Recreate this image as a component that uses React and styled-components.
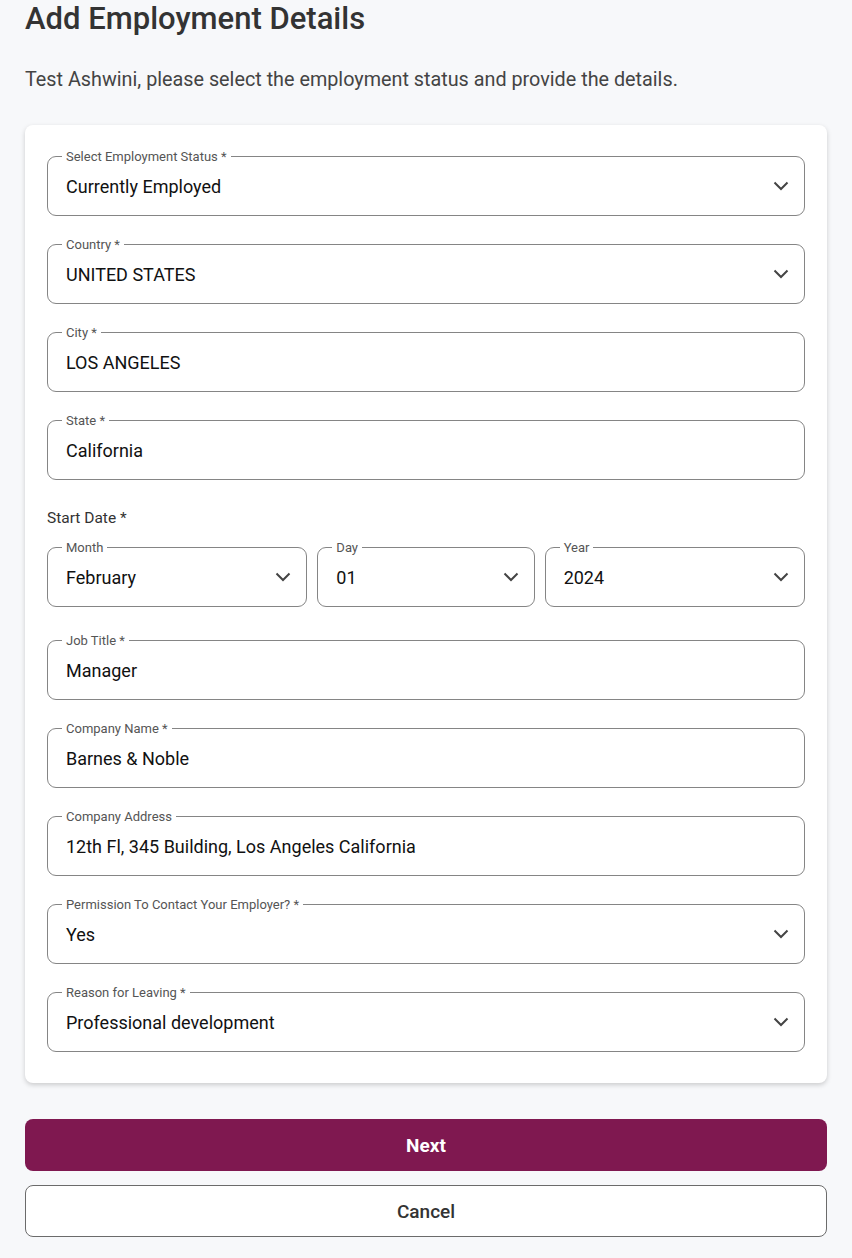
import * as React from "react"
import styled, { createGlobalStyle } from "styled-components"

const GlobalStyle = createGlobalStyle`
  body {
    margin: 0;
    background: #f7f8fa;
    font-family: Roboto, "Liberation Sans", sans-serif;
    color: #222;
  }
`
const Page = styled.main`
  padding: 0 25px 20px;
`
const Title = styled.h1`
  margin: 0;
  font-size: 31px;
  line-height: 38px;
  font-weight: 500;
  color: #333;
`
const Subtitle = styled.p`
  margin: 27px 0 0;
  font-size: 19.8px;
  line-height: 30px;
  color: #444;
`
const Card = styled.section`
  margin-top: 30px;
  background: #fff;
  border-radius: 8px;
  box-shadow: 0 2px 5px rgba(0, 0, 0, 0.18);
  padding: 31px 22px 31px;
  display: flex;
  flex-direction: column;
  gap: 28px;
`
const Field = styled.div`
  position: relative;
  flex: none;
  height: 60px;
  box-sizing: border-box;
  border: 1px solid #858585;
  border-radius: 9px;
  padding: 0 15px 0 18px;
  display: flex;
  align-items: center;
  justify-content: space-between;
`
const Label = styled.span`
  position: absolute;
  top: -8px;
  left: 14px;
  padding: 0 4px;
  background: #fff;
  font-size: 13px;
  line-height: 15px;
  color: #555;
`
const Value = styled.span`
  font-size: 18px;
  color: #111;
`
const DateBlock = styled.div`
  margin-bottom: 5px;
  display: flex;
  flex-direction: column;
  gap: 19px;
`
const GroupLabel = styled.div`
  font-size: 15.5px;
  line-height: 20px;
  color: #333;
`
const Row = styled.div`
  display: grid;
  grid-template-columns: 260fr 217fr 260fr;
  gap: 10px;
`
const Button = styled.button`
  display: block;
  width: 100%;
  height: 52px;
  box-sizing: border-box;
  border-radius: 8px;
  font-family: inherit;
  font-size: 19px;
  margin-top: ${p => p.$top}px;
  background: ${p => (p.$primary ? "#7f1850" : "#fff")};
  color: ${p => (p.$primary ? "#fff" : "#333")};
  font-weight: ${p => (p.$primary ? 700 : 500)};
  border: ${p => (p.$primary ? "none" : "1px solid #6b6b6b")};
`

const Chevron = () => (
  <svg width="16" height="10" viewBox="0 0 16 10" fill="none">
    <path d="M1.5 1.5l6.5 6.5 6.5-6.5" stroke="#444" strokeWidth="2" />
  </svg>
)

const Input = ({ label, value, select }) => (
  <Field>
    <Label>{label}</Label>
    <Value>{value}</Value>
    {select && <Chevron />}
  </Field>
)

export default function App() {
  return (
    <>
      <GlobalStyle />
      <Page>
        <Title>Add Employment Details</Title>
        <Subtitle>Test Ashwini, please select the employment status and provide the details.</Subtitle>
        <Card>
          <Input label="Select Employment Status *" value="Currently Employed" select />
          <Input label="Country *" value="UNITED STATES" select />
          <Input label="City *" value="LOS ANGELES" />
          <Input label="State *" value="California" />
          <DateBlock>
            <GroupLabel>Start Date *</GroupLabel>
            <Row>
              <Input label="Month" value="February" select />
              <Input label="Day" value="01" select />
              <Input label="Year" value="2024" select />
            </Row>
          </DateBlock>
          <Input label="Job Title *" value="Manager" />
          <Input label="Company Name *" value="Barnes & Noble" />
          <Input label="Company Address" value="12th Fl, 345 Building, Los Angeles California" />
          <Input label="Permission To Contact Your Employer? *" value="Yes" select />
          <Input label="Reason for Leaving *" value="Professional development" select />
        </Card>
        <Button $primary $top={36}>Next</Button>
        <Button $top={14}>Cancel</Button>
      </Page>
    </>
  )
}
